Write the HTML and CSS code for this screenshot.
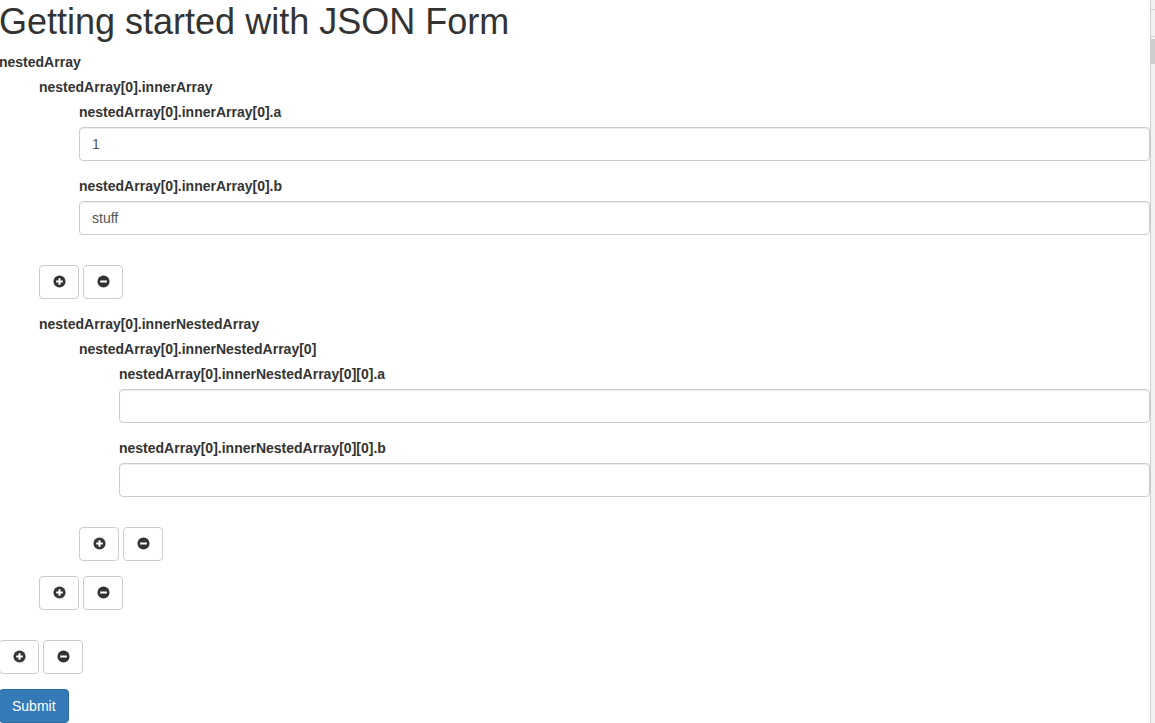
FILE: index.html
```html
<!DOCTYPE html>
<html>
<head>
<meta charset="utf-8">
<title>Getting started with JSON Form</title>
<link rel="stylesheet" href="styles.css">
</head>
<body>
<div class="page">
  <div class="main">
    <h1 class="title">Getting started with JSON Form</h1>
    <form class="form">
      <div class="form-group">
        <label class="lbl">nestedArray</label>
        <div class="items">
          <div class="item obj">
            <div class="form-group">
              <label class="lbl">nestedArray[0].innerArray</label>
              <div class="items">
                <div class="item obj">
                  <div class="form-group">
                    <label class="lbl">nestedArray[0].innerArray[0].a</label>
                    <input class="input" type="text" value="1">
                  </div>
                  <div class="form-group">
                    <label class="lbl">nestedArray[0].innerArray[0].b</label>
                    <input class="input" type="text" value="stuff">
                  </div>
                </div>
              </div>
              <div class="buttons">
                <button type="button" class="btn"><svg class="ico" viewBox="0 0 14 14"><circle cx="7" cy="7" r="6.5"/><path class="cross" d="M5.9 3.4h2.2v2.5h2.5v2.2H8.1v2.5H5.9V8.1H3.4V5.9h2.5z"/></svg></button>
                <button type="button" class="btn"><svg class="ico" viewBox="0 0 14 14"><circle cx="7" cy="7" r="6.5"/><path class="cross" d="M3.4 5.9h7.2v2.2H3.4z"/></svg></button>
              </div>
            </div>
            <div class="form-group">
              <label class="lbl">nestedArray[0].innerNestedArray</label>
              <div class="items">
                <div class="item">
                  <div class="form-group">
                    <label class="lbl">nestedArray[0].innerNestedArray[0]</label>
                    <div class="items">
                      <div class="item obj">
                        <div class="form-group">
                          <label class="lbl">nestedArray[0].innerNestedArray[0][0].a</label>
                          <input class="input" type="text" value="">
                        </div>
                        <div class="form-group">
                          <label class="lbl">nestedArray[0].innerNestedArray[0][0].b</label>
                          <input class="input" type="text" value="">
                        </div>
                      </div>
                    </div>
                    <div class="buttons">
                      <button type="button" class="btn"><svg class="ico" viewBox="0 0 14 14"><circle cx="7" cy="7" r="6.5"/><path class="cross" d="M5.9 3.4h2.2v2.5h2.5v2.2H8.1v2.5H5.9V8.1H3.4V5.9h2.5z"/></svg></button>
                      <button type="button" class="btn"><svg class="ico" viewBox="0 0 14 14"><circle cx="7" cy="7" r="6.5"/><path class="cross" d="M3.4 5.9h7.2v2.2H3.4z"/></svg></button>
                    </div>
                  </div>
                </div>
              </div>
              <div class="buttons">
                <button type="button" class="btn"><svg class="ico" viewBox="0 0 14 14"><circle cx="7" cy="7" r="6.5"/><path class="cross" d="M5.9 3.4h2.2v2.5h2.5v2.2H8.1v2.5H5.9V8.1H3.4V5.9h2.5z"/></svg></button>
                <button type="button" class="btn"><svg class="ico" viewBox="0 0 14 14"><circle cx="7" cy="7" r="6.5"/><path class="cross" d="M3.4 5.9h7.2v2.2H3.4z"/></svg></button>
              </div>
            </div>
          </div>
        </div>
        <div class="buttons">
          <button type="button" class="btn"><svg class="ico" viewBox="0 0 14 14"><circle cx="7" cy="7" r="6.5"/><path class="cross" d="M5.9 3.4h2.2v2.5h2.5v2.2H8.1v2.5H5.9V8.1H3.4V5.9h2.5z"/></svg></button>
          <button type="button" class="btn"><svg class="ico" viewBox="0 0 14 14"><circle cx="7" cy="7" r="6.5"/><path class="cross" d="M3.4 5.9h7.2v2.2H3.4z"/></svg></button>
        </div>
      </div>
      <button type="button" class="btn-primary">Submit</button>
    </form>
  </div>
  <div class="scrollbar">
    <div class="sb-top"></div>
    <div class="sb-track"></div>
    <div class="sb-thumb"></div>
  </div>
</div>
</body>
</html>
```
FILE: styles.css
```css
html, body {
  margin: 0;
  padding: 0;
  background: #fff;
  height: 100%;
  overflow: hidden;
}
body {
  font-family: "Liberation Sans", Arial, sans-serif;
  font-size: 14px;
  line-height: 20px;
  color: #333;
}
.page {
  display: flex;
  height: 723px;
}
.main {
  flex: 1;
  margin-left: -1px;
  min-width: 0;
}
.title {
  font-family: "Liberation Sans", Arial, sans-serif;
  font-size: 36px;
  font-weight: 400;
  line-height: 39.6px;
  margin: 2px 0 10px;
  color: #333;
}
.form { margin: 0; }
.form-group {
  margin-bottom: 15px;
  display: flow-root;
}
.lbl {
  display: block;
  font-weight: bold;
  margin-bottom: 5px;
  line-height: 20px;
}
.items {
  padding-left: 40px;
}
.item { display: flow-root; }
.item.obj { padding-bottom: 15px; }
.input {
  display: block;
  box-sizing: border-box;
  width: 100%;
  height: 34px;
  padding: 6px 12px;
  font-family: "Liberation Sans", Arial, sans-serif;
  font-size: 14px;
  line-height: 20px;
  color: #555;
  background: #fff;
  border: 1px solid #ccc;
  border-radius: 4px;
  box-shadow: inset 0 1px 1px rgba(0,0,0,.075);
  margin: 0;
}
.buttons {
  display: flex;
  gap: 4px;
}
.btn {
  box-sizing: border-box;
  width: 40px;
  height: 34px;
  padding: 0;
  margin: 0;
  background: #fff;
  border: 1px solid #ccc;
  border-radius: 4px;
  display: flex;
  align-items: center;
  justify-content: center;
  cursor: pointer;
}
.ico {
  width: 13px;
  height: 13px;
  display: block;
}
.ico circle { fill: #333; }
.ico .cross { fill: #fff; }
.btn-primary {
  box-sizing: border-box;
  height: 34px;
  padding: 6px 12px;
  margin: 0;
  font-family: "Liberation Sans", Arial, sans-serif;
  font-size: 14px;
  line-height: 20px;
  color: #fff;
  background: #337ab7;
  border: 1px solid #2e6da4;
  border-radius: 4px;
  cursor: pointer;
}
.scrollbar {
  width: 4px;
  border-left: 1px solid #cfcfcf;
  background: #f1f1f1;
  display: flex;
  flex-direction: column;
}
.sb-top {
  height: 9px;
  border-bottom: 1px solid #d6d6d6;
}
.sb-track {
  height: 26px;
  border-bottom: 1px solid #d6d6d6;
}
.sb-thumb {
  margin-top: 2px;
  height: 25px;
  background: #cdcdcd;
}
```
